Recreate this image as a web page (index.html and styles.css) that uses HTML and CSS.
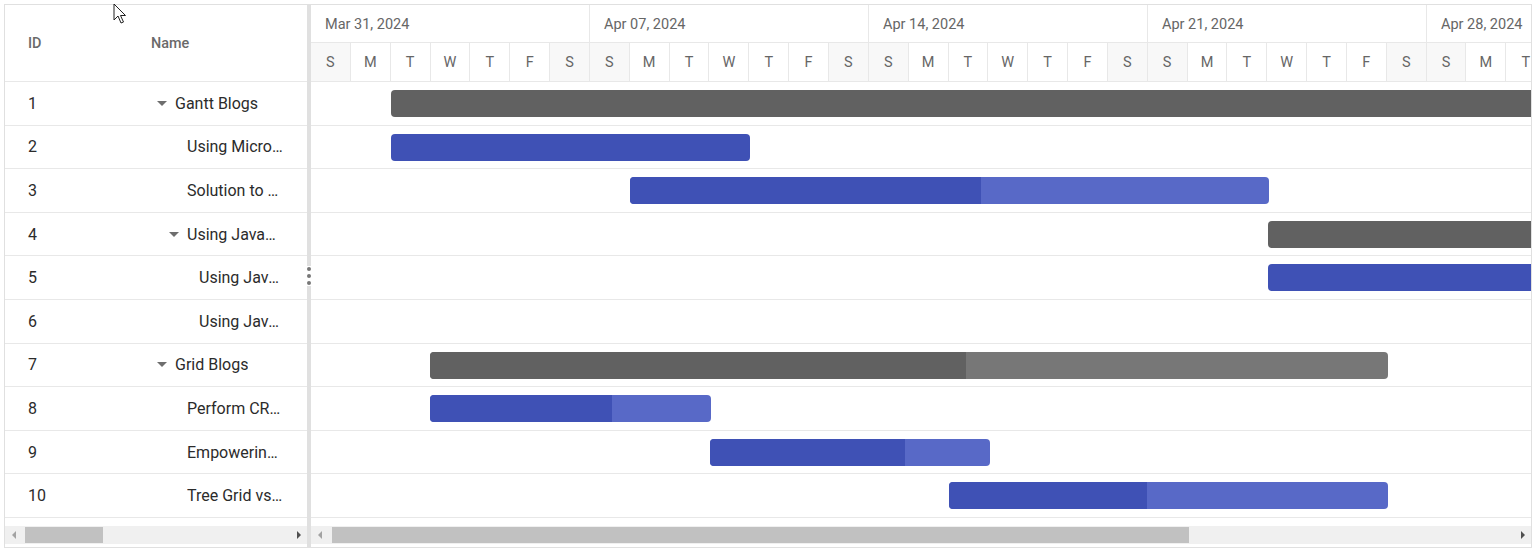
FILE: index.html
```html
<!DOCTYPE html>
<html lang="en">
<head>
<meta charset="utf-8">
<title>Gantt</title>
<link rel="stylesheet" href="styles.css">
</head>
<body>
<div class="gantt">
  <div class="grid-pane">
    <div class="grid-header">
      <div class="cell col-id">ID</div>
      <div class="cell col-name">Name</div>
      <div class="cell col-more">Start Date</div>
    </div>
    <div class="grid-body">
      <div class="grow"><div class="cell col-id">1</div><div class="cell col-name"><span class="ind l0"></span><span class="exp"></span><span class="txt">Gantt Blogs</span></div></div>
      <div class="grow"><div class="cell col-id">2</div><div class="cell col-name"><span class="ind l1"></span><span class="noexp"></span><span class="txt">Using Microsoft Project Files</span></div></div>
      <div class="grow"><div class="cell col-id">3</div><div class="cell col-name"><span class="ind l1"></span><span class="noexp"></span><span class="txt">Solution to Project Management</span></div></div>
      <div class="grow"><div class="cell col-id">4</div><div class="cell col-name"><span class="ind l1"></span><span class="exp"></span><span class="txt">Using JavaScript Gantt</span></div></div>
      <div class="grow"><div class="cell col-id">5</div><div class="cell col-name"><span class="ind l2"></span><span class="noexp"></span><span class="txt">Using JavaScript Gantt Chart</span></div></div>
      <div class="grow"><div class="cell col-id">6</div><div class="cell col-name"><span class="ind l2"></span><span class="noexp"></span><span class="txt">Using JavaScript Gantt Library</span></div></div>
      <div class="grow"><div class="cell col-id">7</div><div class="cell col-name"><span class="ind l0"></span><span class="exp"></span><span class="txt">Grid Blogs</span></div></div>
      <div class="grow"><div class="cell col-id">8</div><div class="cell col-name"><span class="ind l1"></span><span class="noexp"></span><span class="txt">Perform CRUD Operations</span></div></div>
      <div class="grow"><div class="cell col-id">9</div><div class="cell col-name"><span class="ind l1"></span><span class="noexp"></span><span class="txt">Empowering Data Grid</span></div></div>
      <div class="grow"><div class="cell col-id">10</div><div class="cell col-name"><span class="ind l1"></span><span class="noexp"></span><span class="txt">Tree Grid vs Data Grid</span></div></div>
    </div>
    <div class="spacer"></div>
    <div class="hscroll">
      <div class="sbtn"><span class="arr-left"></span></div>
      <div class="track"><div class="thumb" style="margin-left:3px;width:78px"></div></div>
      <div class="sbtn"><span class="arr-right"></span></div>
    </div>
  </div>

  <div class="splitter"><span class="grip"><i></i><i></i><i></i></span></div>

  <div class="chart-pane">
    <div class="timeline">
      <div class="weeks">
        <div class="week">Mar 31, 2024</div>
        <div class="week">Apr 07, 2024</div>
        <div class="week">Apr 14, 2024</div>
        <div class="week">Apr 21, 2024</div>
        <div class="week">Apr 28, 2024</div>
      </div>
      <div class="days">
        <div class="day we">S</div><div class="day">M</div><div class="day">T</div><div class="day">W</div><div class="day">T</div><div class="day">F</div><div class="day we">S</div>
        <div class="day we">S</div><div class="day">M</div><div class="day">T</div><div class="day">W</div><div class="day">T</div><div class="day">F</div><div class="day we">S</div>
        <div class="day we">S</div><div class="day">M</div><div class="day">T</div><div class="day">W</div><div class="day">T</div><div class="day">F</div><div class="day we">S</div>
        <div class="day we">S</div><div class="day">M</div><div class="day">T</div><div class="day">W</div><div class="day">T</div><div class="day">F</div><div class="day we">S</div>
        <div class="day we">S</div><div class="day">M</div><div class="day">T</div><div class="day">W</div><div class="day">T</div><div class="day">F</div><div class="day we">S</div>
      </div>
    </div>
    <div class="chart-body">
      <div class="crow"><div class="bar parent" style="left:80px;width:1200px"><div class="prog" style="width:100%"></div></div></div>
      <div class="crow"><div class="bar" style="left:80px;width:359px"><div class="prog" style="width:100%"></div></div></div>
      <div class="crow"><div class="bar" style="left:319px;width:639px"><div class="prog" style="width:351px"></div></div></div>
      <div class="crow"><div class="bar parent" style="left:957px;width:400px"><div class="prog" style="width:100%"></div></div></div>
      <div class="crow"><div class="bar" style="left:957px;width:400px"><div class="prog" style="width:100%"></div></div></div>
      <div class="crow"></div>
      <div class="crow"><div class="bar parent" style="left:119px;width:958px"><div class="prog" style="width:536px"></div></div></div>
      <div class="crow"><div class="bar" style="left:119px;width:281px"><div class="prog" style="width:182px"></div></div></div>
      <div class="crow"><div class="bar" style="left:399px;width:280px"><div class="prog" style="width:195px"></div></div></div>
      <div class="crow"><div class="bar" style="left:638px;width:439px"><div class="prog" style="width:198px"></div></div></div>
    </div>
    <div class="spacer"></div>
    <div class="hscroll">
      <div class="sbtn"><span class="arr-left"></span></div>
      <div class="track"><div class="thumb" style="margin-left:4px;width:857px"></div></div>
      <div class="sbtn"><span class="arr-right"></span></div>
    </div>
  </div>
</div>
<svg class="cursor" width="14" height="22" viewBox="0 0 14 22"><path d="M1 1 L1 17 L5 13 L8 20 L10.5 19 L7.5 12.5 L12.5 12.5 Z" fill="#fff" stroke="#222" stroke-width="1" stroke-linejoin="round"/></svg>
</body>
</html>
```

FILE: styles.css
```css
* { box-sizing: border-box; }
html, body { margin: 0; padding: 0; background: #fff; }
body {
  font-family: Roboto, "Noto Sans", "Liberation Sans", sans-serif;
  color: #212121;
  position: relative;
}
.gantt {
  margin: 4px 0 0 4px;
  width: 1528px;
  height: 544px;
  border: 1px solid #e0e0e0;
  display: flex;
  overflow: hidden;
}
.grid-pane {
  width: 302px;
  flex: none;
  display: flex;
  flex-direction: column;
  overflow: hidden;
}
.splitter {
  width: 4px;
  flex: none;
  background: #e0e0e0;
  display: flex;
  align-items: center;
  justify-content: center;
}
.grip {
  background: #fff;
  width: 4px;
  height: 20px;
  display: flex;
  flex-direction: column;
  align-items: center;
  justify-content: center;
  gap: 3px;
}
.grip i {
  display: block;
  width: 4px;
  height: 4px;
  border-radius: 50%;
  background: #777;
}
.chart-pane {
  width: 1220px;
  flex: none;
  display: flex;
  flex-direction: column;
  overflow: hidden;
}

/* grid */
.grid-header {
  height: 77px;
  flex: none;
  display: flex;
  border-bottom: 1px solid #e8e8e8;
  color: #6a6a6a;
  font-size: 14.4px;
  font-weight: 500;
}
.cell {
  display: flex;
  align-items: center;
  flex: none;
  white-space: nowrap;
  overflow: hidden;
}
.col-id { width: 121px; padding-left: 23px; }
.col-name { width: 170px; padding-left: 25px; padding-right: 13px; }
.col-more { width: 160px; padding-left: 26px; }
.grid-body { height: 436px; flex: none; }
.grow {
  height: 43.6px;
  display: flex;
  border-bottom: 1px solid #e8e8e8;
  font-size: 16px;
  color: #2b2b2b;
}
.ind { flex: none; display: block; }
.ind.l0 { width: 0; }
.ind.l1 { width: 12px; }
.ind.l2 { width: 24px; }
.exp, .noexp {
  flex: none;
  width: 24px;
  height: 20px;
  display: flex;
  align-items: center;
  justify-content: center;
}
.exp::before {
  content: "";
  display: block;
  width: 0; height: 0;
  border-left: 5px solid transparent;
  border-right: 5px solid transparent;
  border-top: 5px solid #6e6e6e;
  margin-left: -3px;
}
.txt {
  min-width: 0;
  overflow: hidden;
  text-overflow: ellipsis;
  white-space: nowrap;
}
.spacer { height: 8px; flex: none; }

/* scrollbar */
.hscroll {
  height: 18px;
  flex: none;
  display: flex;
  background: #f0f0f0;
}
.sbtn {
  width: 17px;
  flex: none;
  display: flex;
  align-items: center;
  justify-content: center;
}
.arr-left {
  width: 0; height: 0;
  border-top: 4px solid transparent;
  border-bottom: 4px solid transparent;
  border-right: 4px solid #a3a3a3;
}
.arr-right {
  width: 0; height: 0;
  border-top: 4px solid transparent;
  border-bottom: 4px solid transparent;
  border-left: 4px solid #505050;
}
.track {
  flex: 1;
  display: flex;
  align-items: center;
}
.thumb {
  height: 16px;
  background: #c1c1c1;
}

/* timeline */
.timeline {
  height: 77px;
  flex: none;
  border-bottom: 1px solid #e8e8e8;
  color: #666;
  font-size: 14.5px;
}
.weeks {
  height: 38px;
  display: flex;
  border-bottom: 1px solid #e8e8e8;
}
.week {
  width: 279px;
  flex: none;
  border-right: 1px solid #e8e8e8;
  padding-left: 14px;
  padding-top: 1px;
  display: flex;
  align-items: center;
}
.days {
  height: 38px;
  display: grid;
  grid-template-columns: repeat(35, 39.857px);
}
.day {
  border-right: 1px solid #e8e8e8;
  display: flex;
  align-items: center;
  justify-content: center;
}
.day.we { background: #f8f8f8; }

/* chart body */
.chart-body { height: 436px; flex: none; }
.crow {
  position: relative;
  height: 43.6px;
  border-bottom: 1px solid #e8e8e8;
}
.bar {
  position: absolute;
  top: 8px;
  height: 27px;
  border-radius: 4px;
  overflow: hidden;
  background: #5869c7;
}
.bar .prog {
  height: 100%;
  background: #3f51b5;
}
.bar.parent { background: #777; }
.bar.parent .prog { background: #616161; }

.cursor {
  position: absolute;
  left: 113px;
  top: 3px;
}
```
